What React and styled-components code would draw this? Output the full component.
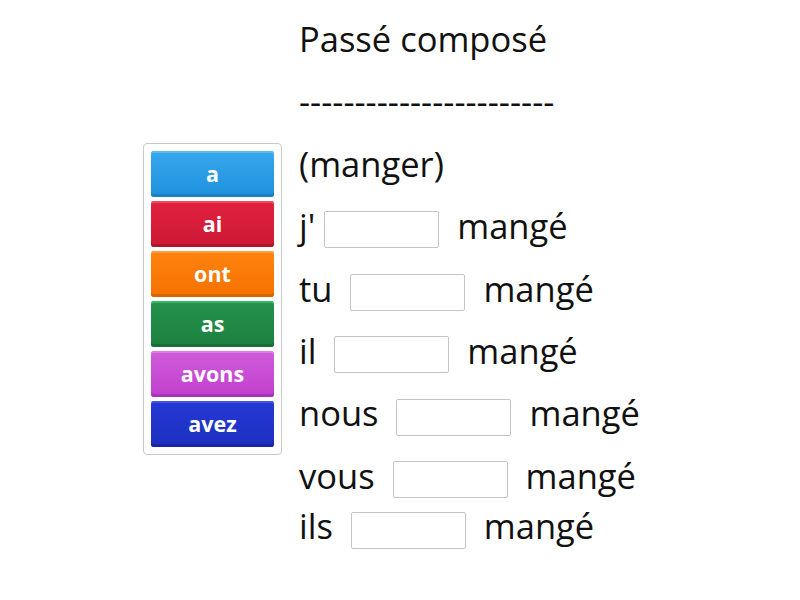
import React from 'react';
import styled, { createGlobalStyle } from 'styled-components';

const GlobalStyle = createGlobalStyle`
  html, body {
    margin: 0;
    padding: 0;
    background: #ffffff;
  }
  body {
    font-family: "Open Sans", "DejaVu Sans", sans-serif;
    color: #111111;
  }
`;

const Page = styled.div`
  display: flex;
  align-items: flex-start;
  gap: 17px;
  padding-left: 143px;
  width: 800px;
  height: 600px;
  box-sizing: border-box;
  overflow: hidden;
`;

const Bank = styled.div`
  margin-top: 143px;
  width: 139px;
  box-sizing: border-box;
  padding: 7px;
  display: flex;
  flex-direction: column;
  gap: 4px;
  border: 1px solid #c9c9c9;
  border-radius: 4px;
  background: #ffffff;
`;

const Tile = styled.div`
  height: 46px;
  border-radius: 3px;
  display: flex;
  align-items: center;
  justify-content: center;
  color: #ffffff;
  font-family: "Open Sans", sans-serif;
  font-weight: 700;
  font-size: 21.5px;
  background: linear-gradient(to bottom, ${(p) => p.top} 0%, ${(p) => p.bottom} 100%);
  box-shadow: inset 0 2px 0 ${(p) => p.light}, inset 0 -3px 0 ${(p) => p.dark};
  padding-bottom: 2px;
  box-sizing: border-box;
`;

const Sheet = styled.div`
  padding-top: 8px;
  font-size: 34.5px;
  color: #111111;
`;

const Line = styled.div`
  line-height: ${(p) => p.lh || 62.4}px;
  white-space: nowrap;
`;

const Blank = styled.span`
  display: inline-block;
  vertical-align: middle;
  width: 115px;
  height: 37px;
  margin: 0 9px;
  border: 1px solid #c4c4c4;
  border-radius: 2px;
  background: #ffffff;
  box-sizing: border-box;
`;

const tiles = [
  { label: 'a', top: '#36a8ee', bottom: '#1f90dc', light: '#5cbaf3', dark: '#1a7fc4' },
  { label: 'ai', top: '#e2223f', bottom: '#cc1834', light: '#ea4a62', dark: '#b3122c' },
  { label: 'ont', top: '#ff820f', bottom: '#f57300', light: '#ff9a3e', dark: '#dc6500' },
  { label: 'as', top: '#23924b', bottom: '#1d8040', light: '#35bb5f', dark: '#176e36' },
  { label: 'avons', top: '#d05cdb', bottom: '#c03fcd', light: '#dd7ce6', dark: '#a932b8' },
  { label: 'avez', top: '#2439d4', bottom: '#1d2fc0', light: '#4255e0', dark: '#1827a6' },
];

const rows = [
  { subject: "j'", gap: 0 },
  { subject: 'tu' },
  { subject: 'il' },
  { subject: 'nous' },
  { subject: 'vous' },
];

export default function App() {
  return (
    <>
      <GlobalStyle />
      <Page>
        <Bank>
          {tiles.map((t) => (
            <Tile key={t.label} top={t.top} bottom={t.bottom} light={t.light} dark={t.dark}>
              {t.label}
            </Tile>
          ))}
        </Bank>
        <Sheet>
          <Line>Passé composé</Line>
          <Line>-----------------------</Line>
          <Line>(manger)</Line>
          {rows.map((r) => (
            <Line key={r.subject}>
              {r.subject}
              {r.gap === 0 ? '' : ' '}
              <Blank />
              {' '}mangé
            </Line>
          ))}
          <Line lh={37.6}>
            ils <Blank /> mangé
          </Line>
        </Sheet>
      </Page>
    </>
  );
}
